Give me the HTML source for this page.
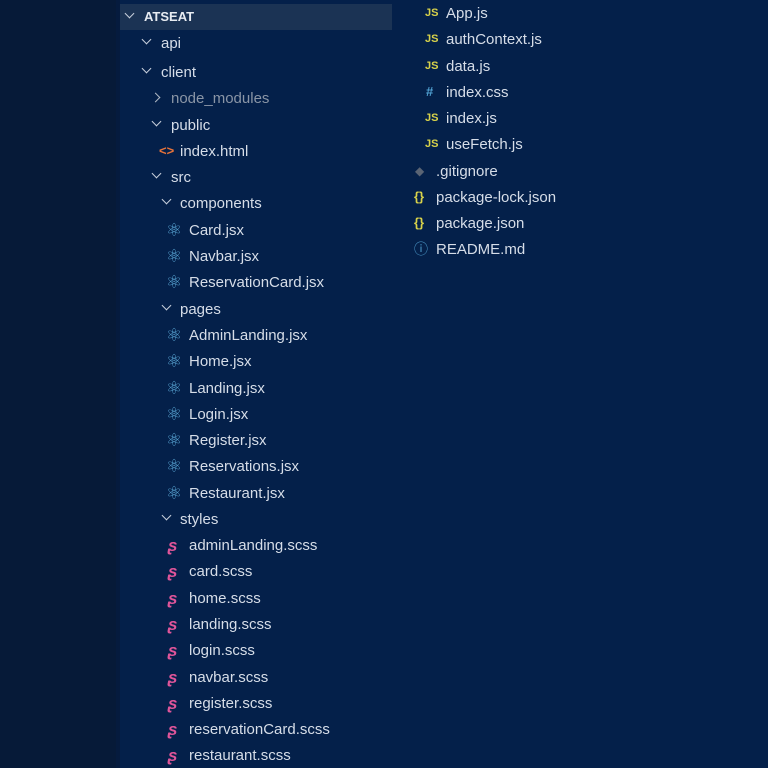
<!DOCTYPE html>
<html><head><meta charset="utf-8"><style>
html,body{margin:0;padding:0;width:768px;height:768px;overflow:hidden;background:#061a38;}
body{position:relative;font-family:"Liberation Sans",sans-serif;font-size:15px;color:#d6dde8;}
.panel{position:absolute;left:120px;top:0;width:648px;height:768px;background:#04204a;}
.edge{position:absolute;left:116px;top:0;width:4px;height:768px;background:#051b3e;}
.hdr{position:absolute;left:120px;top:4px;width:272px;height:26px;background:#1b3354;}
.r{position:absolute;height:26px;line-height:26px;white-space:nowrap;}
.t{position:absolute;top:1px;}
.chev{position:absolute;top:6px;width:6px;height:6px;border-right:1.5px solid #c8d0dc;border-bottom:1.5px solid #c8d0dc;transform:rotate(45deg);}
.chr{position:absolute;top:9px;width:6px;height:6px;border-right:1.5px solid #b0b8c4;border-bottom:1.5px solid #b0b8c4;transform:rotate(-45deg);}
.js{position:absolute;top:0;font-size:11px;font-weight:bold;color:#d8d24a;}
.ic{position:absolute;top:0;}
.re{position:absolute;top:0;color:#5aa7d6;font-size:18px;left:166px;}
.sc{position:absolute;top:1px;left:168px;color:#e0559a;font-weight:bold;font-style:italic;font-size:17px;}
</style></head><body>
<div class="edge"></div>
<div class="panel"></div>
<div class="hdr"></div>
<div class="r" style="top:4px;left:0"><span class="chev" style="left:126px"></span><span class="t" style="left:144px;font-weight:bold;font-size:13px;color:#e8ecf2;top:0">ATSEAT</span></div>

<div class="r" style="top:30px"><span class="chev" style="left:143px"></span><span class="t" style="left:161px">api</span></div>
<div class="r" style="top:59px"><span class="chev" style="left:143px"></span><span class="t" style="left:161px">client</span></div>
<div class="r" style="top:85px"><span class="chr" style="left:152px"></span><span class="t" style="left:171px;color:#8a95a6">node_modules</span></div>
<div class="r" style="top:112px"><span class="chev" style="left:153px"></span><span class="t" style="left:171px">public</span></div>
<div class="r" style="top:138px"><span class="ic" style="left:159px;color:#e8743b;font-weight:bold;font-size:13px">&lt;&gt;</span><span class="t" style="left:180px">index.html</span></div>
<div class="r" style="top:164px"><span class="chev" style="left:153px"></span><span class="t" style="left:171px">src</span></div>
<div class="r" style="top:190px"><span class="chev" style="left:163px"></span><span class="t" style="left:180px">components</span></div>
<div class="r" style="top:217px"><span class="re">⚛</span><span class="t" style="left:189px">Card.jsx</span></div>
<div class="r" style="top:243px"><span class="re">⚛</span><span class="t" style="left:189px">Navbar.jsx</span></div>
<div class="r" style="top:269px"><span class="re">⚛</span><span class="t" style="left:189px">ReservationCard.jsx</span></div>
<div class="r" style="top:296px"><span class="chev" style="left:163px"></span><span class="t" style="left:180px">pages</span></div>
<div class="r" style="top:322px"><span class="re">⚛</span><span class="t" style="left:189px">AdminLanding.jsx</span></div>
<div class="r" style="top:348px"><span class="re">⚛</span><span class="t" style="left:189px">Home.jsx</span></div>
<div class="r" style="top:375px"><span class="re">⚛</span><span class="t" style="left:189px">Landing.jsx</span></div>
<div class="r" style="top:401px"><span class="re">⚛</span><span class="t" style="left:189px">Login.jsx</span></div>
<div class="r" style="top:427px"><span class="re">⚛</span><span class="t" style="left:189px">Register.jsx</span></div>
<div class="r" style="top:453px"><span class="re">⚛</span><span class="t" style="left:189px">Reservations.jsx</span></div>
<div class="r" style="top:480px"><span class="re">⚛</span><span class="t" style="left:189px">Restaurant.jsx</span></div>
<div class="r" style="top:506px"><span class="chev" style="left:163px"></span><span class="t" style="left:180px">styles</span></div>
<div class="r" style="top:532px"><span class="sc">ʂ</span><span class="t" style="left:189px">adminLanding.scss</span></div>
<div class="r" style="top:558px"><span class="sc">ʂ</span><span class="t" style="left:189px">card.scss</span></div>
<div class="r" style="top:585px"><span class="sc">ʂ</span><span class="t" style="left:189px">home.scss</span></div>
<div class="r" style="top:611px"><span class="sc">ʂ</span><span class="t" style="left:189px">landing.scss</span></div>
<div class="r" style="top:637px"><span class="sc">ʂ</span><span class="t" style="left:189px">login.scss</span></div>
<div class="r" style="top:664px"><span class="sc">ʂ</span><span class="t" style="left:189px">navbar.scss</span></div>
<div class="r" style="top:690px"><span class="sc">ʂ</span><span class="t" style="left:189px">register.scss</span></div>
<div class="r" style="top:716px"><span class="sc">ʂ</span><span class="t" style="left:189px">reservationCard.scss</span></div>
<div class="r" style="top:742px"><span class="sc">ʂ</span><span class="t" style="left:189px">restaurant.scss</span></div>

<div class="r" style="top:0px"><span class="js" style="left:425px">JS</span><span class="t" style="left:446px">App.js</span></div>
<div class="r" style="top:26px"><span class="js" style="left:425px">JS</span><span class="t" style="left:446px">authContext.js</span></div>
<div class="r" style="top:53px"><span class="js" style="left:425px">JS</span><span class="t" style="left:446px">data.js</span></div>
<div class="r" style="top:79px"><span class="ic" style="left:426px;color:#4f9fd0;font-weight:bold;font-size:13px">#</span><span class="t" style="left:446px">index.css</span></div>
<div class="r" style="top:105px"><span class="js" style="left:425px">JS</span><span class="t" style="left:446px">index.js</span></div>
<div class="r" style="top:131px"><span class="js" style="left:425px">JS</span><span class="t" style="left:446px">useFetch.js</span></div>
<div class="r" style="top:158px"><span class="ic" style="left:415px;color:#5a6474;font-size:12px">◆</span><span class="t" style="left:436px">.gitignore</span></div>
<div class="r" style="top:184px"><span class="ic" style="left:414px;color:#d8d24a;font-weight:bold;font-size:13px">{}</span><span class="t" style="left:436px">package-lock.json</span></div>
<div class="r" style="top:210px"><span class="ic" style="left:414px;color:#d8d24a;font-weight:bold;font-size:13px">{}</span><span class="t" style="left:436px">package.json</span></div>
<div class="r" style="top:236px"><span class="ic" style="left:414px;color:#4f9fd0;font-size:14px">ⓘ</span><span class="t" style="left:436px">README.md</span></div>
</body></html>
